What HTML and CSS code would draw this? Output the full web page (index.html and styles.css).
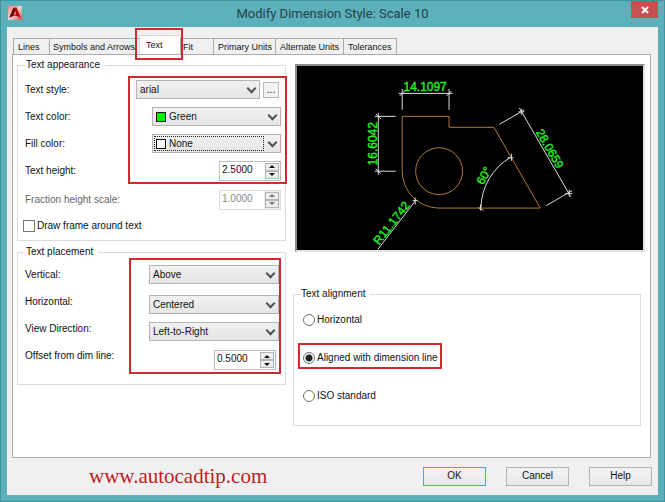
FILE: index.html
```html
<!DOCTYPE html>
<html lang="en">
<head>
<meta charset="utf-8">
<title>Modify Dimension Style: Scale 10</title>
<link rel="stylesheet" href="styles.css">
</head>
<body>
<div class="window">
  <header class="titlebar">
    <svg class="app-icon" viewBox="0 0 14 14" aria-hidden="true">
      <defs><linearGradient id="ic" x1="0" y1="0" x2="1" y2="1"><stop offset="0" stop-color="#e88a84"/><stop offset=".5" stop-color="#f6d3cf"/><stop offset="1" stop-color="#cf4a44"/></linearGradient></defs>
      <rect width="14" height="14" fill="url(#ic)"/>
      <path d="M5.5 1.5 8.6 1.5 12.8 11.8 9.4 10.2 6.6 9.6 1.4 11.8Z" fill="#a80f0f"/>
      <path d="M5.5 1.5 7 4 4.6 9.8 1.4 11.8Z" fill="#5e0808"/>
      <path d="M7 5.2 8.3 8.2 5.9 8.5Z" fill="#f3a49c"/>
    </svg>
    <h1>Modify Dimension Style: Scale 10</h1>
    <button class="close" type="button" aria-label="Close"><svg viewBox="0 0 8 8"><path d="M1 1 7 7M7 1 1 7"/></svg></button>
  </header>
  <main class="client">
    <nav class="tabs" role="tablist">
      <button type="button" role="tab" class="tab tab-lines">Lines</button>
      <button type="button" role="tab" class="tab tab-symbols">Symbols and Arrows</button>
      <div class="tab-current"><button type="button" role="tab" aria-selected="true" class="tab selected">Text</button><span class="mark"></span></div>
      <button type="button" role="tab" class="tab tab-fit">Fit</button>
      <button type="button" role="tab" class="tab tab-primary">Primary Units</button>
      <button type="button" role="tab" class="tab tab-alternate">Alternate Units</button>
      <button type="button" role="tab" class="tab tab-tolerances">Tolerances</button>
    </nav>
    <section class="panel">
      <div class="column">
        <fieldset class="group appearance">
          <legend>Text appearance</legend>
          <div class="row"><label for="style">Text style:</label>
            <div class="pair"><span class="select wide"><select id="style"><option>arial</option></select></span><button class="more" type="button">...</button></div></div>
          <div class="row"><label for="color">Text color:</label>
            <span class="select colour"><i class="swatch green"></i><select id="color"><option>Green</option></select></span></div>
          <div class="row"><label for="fill">Fill color:</label>
            <span class="select colour focused"><i class="swatch"></i><select id="fill"><option>None</option></select></span></div>
          <div class="row"><label for="height">Text height:</label>
            <span class="spin"><input id="height" type="text" value="2.5000"><span class="steps"><button type="button" aria-label="Increase"></button><button type="button" aria-label="Decrease"></button></span></span></div>
          <div class="row fraction"><label for="fraction">Fraction height scale:</label>
            <span class="spin off"><input id="fraction" type="text" value="1.0000" disabled><span class="steps"><button type="button" disabled aria-label="Increase"></button><button type="button" disabled aria-label="Decrease"></button></span></span></div>
          <label class="check"><input type="checkbox">Draw frame around text</label>
          <span class="mark"></span>
        </fieldset>
        <fieldset class="group placement">
          <legend>Text placement</legend>
          <div class="labels">
            <label for="vertical">Vertical:</label>
            <label for="horizontal">Horizontal:</label>
            <label for="direction">View Direction:</label>
            <label for="offset">Offset from dim line:</label>
          </div>
          <div class="fields">
            <span class="select"><select id="vertical"><option>Above</option></select></span>
            <span class="select"><select id="horizontal"><option>Centered</option></select></span>
            <span class="select"><select id="direction"><option>Left-to-Right</option></select></span>
            <span class="spin"><input id="offset" type="text" value="0.5000"><span class="steps"><button type="button" aria-label="Increase"></button><button type="button" aria-label="Decrease"></button></span></span>
            <span class="mark"></span>
          </div>
        </fieldset>
      </div>
      <div class="column">
        <div class="preview">
          <svg viewBox="297 66 347 185" role="img" aria-label="Dimension preview">
            <path class="part" d="M402.5 171V116.500H449.500V127.500H494.500L541 208.500H439A37 37 0 0 1 402.500 171Z"/>
            <circle class="part" cx="439.500" cy="171.500" r="23.500"/>
            <g class="dim">
              <path d="M399 93.500H453M402.500 89V110M449.500 89V110M400 96 405 91M447 96 452 91"/>
              <path d="M378.500 113V175M375 116.500H396M375 171.500H396M376 114 381 119M376 169 381 174"/>
              <path d="M415.500 201.500 378 250M413 201H418M415.500 198V205"/>
              <path d="M520 108 571.500 197M500 124.500 525 110M547 206 573 191M519 112H525M522 109V115M566 194H573M570 190V197"/>
              <path d="M481.500 208.500A59.500 59.500 0 0 1 511.500 157.500M479 208 484 211M481 205V211M508 158H514M512 154V161"/>
            </g>
            <g class="value">
              <text x="425.500" y="91">14.1097</text>
              <text transform="translate(377 144) rotate(-90)">16.6042</text>
              <text transform="translate(395 226) rotate(-52)">R11.1742</text>
              <text transform="translate(547 151) rotate(60)">28.0659</text>
              <text transform="translate(488 178) rotate(-60)">60°</text>
            </g>
          </svg>
        </div>
        <fieldset class="group alignment">
          <legend>Text alignment</legend>
          <label><input type="radio" name="align">Horizontal</label>
          <label class="chosen"><input type="radio" name="align" checked>Aligned with dimension line<span class="mark"></span></label>
          <label><input type="radio" name="align">ISO standard</label>
        </fieldset>
      </div>
    </section>
    <footer class="footer">
      <span class="site">www.autocadtip.com</span>
      <button class="action primary" type="button">OK</button>
      <button class="action" type="button">Cancel</button>
      <button class="action" type="button">Help</button>
    </footer>
  </main>
</div>
</body>
</html>
```
FILE: styles.css
```css
* { box-sizing: border-box; }
body { margin: 0; font: 10px/14px "Liberation Sans", Arial, sans-serif; color: #111; }
button, input, select { font: inherit; color: inherit; margin: 0; padding: 0; border-radius: 0; }

.window { min-height: 100vh; display: flex; flex-direction: column; background: #5bb0bc; border: 1px solid #3f929e; padding: 0 6px 6px; }
.titlebar { height: 26px; display: grid; grid-template-columns: 36px 1fr 36px; align-items: start; }
.app-icon { width: 14px; height: 14px; margin: 5px 0 0 1px; }
h1 { margin: 0; text-align: center; font: 13px/26px Roboto, sans-serif; color: #24424a; }
.close { width: 27px; height: 17px; border: 0; background: #c85050; justify-self: end; display: grid; place-items: center; }
.close svg { width: 8px; height: 8px; fill: none; stroke: #fff; stroke-width: 2; }
.client { flex: 1; display: flex; flex-direction: column; background: #f0f0f0; padding: 8px 7px 9px 5px; }

.tabs { display: flex; align-items: flex-end; height: 19px; padding-left: 1px; font-size: 9px; }
.tab { height: 16px; border: 1px solid #acacac; border-right: 0; border-bottom: 0; background: #f0f0f0; text-align: left; padding: 0 0 0 4px; white-space: nowrap; }
.tab-lines { width: 36px; }
.tab-symbols { width: 90px; padding-left: 3px; }
.tab-current { position: relative; width: 41px; height: 20px; margin-bottom: -1px; z-index: 1; }
.tab.selected { width: 100%; height: 19px; background: #fff; padding-left: 6px; border-color: #d9d9d9; }
.tab-fit { width: 33px; padding-left: 2px; }
.tab-primary { width: 62px; }
.tab-alternate { width: 68px; }
.tab-tolerances { width: 54px; border-right: 1px solid #acacac; }

.mark { position: absolute; border: 2px solid #cf2a2e; pointer-events: none; }
.tab-current .mark { inset: -7px -3px -5px -4px; }

.panel { flex: 1; background: #fff; border: 1px solid #acacac; padding: 3px 5px 4px 4px; display: grid; grid-template-columns: minmax(0, 269fr) minmax(0, 352fr); gap: 7px; align-items: start; }
.group { position: relative; margin: 0; border: 1px solid #dcdcdc; min-width: 0; padding: 0 4px 0 7px; }
legend { line-height: 14px; }
.group legend { padding: 0 5px 0 1px; }

.row { height: 27px; display: flex; align-items: center; justify-content: space-between; }
.fraction { height: 31px; color: #666; }
.appearance { padding-top: 4px; height: 183px; }
.appearance .mark { inset: 4px -2px 56px 110px; }
.pair { display: flex; align-items: center; gap: 3px; padding-right: 2px; }
.more { width: 16px; height: 16px; border: 1px solid #bbb; background: #f2f2f2; line-height: 10px; }

.select { position: relative; display: block; height: 19px; width: 130px; }
.select select { appearance: none; width: 100%; height: 100%; border: 1px solid #b4b4b4; background: linear-gradient(#f1f1f1, #e5e5e5); padding: 0 16px 0 3px; }
.select.wide { width: 124px; }
.select::after { content: ""; position: absolute; right: 5px; top: 5px; width: 5px; height: 5px; border: solid #505050; border-width: 0 2px 2px 0; transform: rotate(45deg); pointer-events: none; }
.select.colour { width: 129px; }
.select.colour select { padding-left: 16px; }
.swatch { position: absolute; left: 4px; top: 5px; width: 10px; height: 10px; border: 1px solid #111; background: #fff; pointer-events: none; }
.swatch.green { background: #00f000; }
.focused::before { content: ""; position: absolute; inset: 2px 17px 2px 2px; border: 1px dotted #222; pointer-events: none; }

.spin { display: flex; width: 62px; height: 20px; border: 1px solid #bcbcbc; background: #fff; }
.spin input { width: 44px; border: 0; background: none; padding: 0 0 2px 2px; }
.steps { display: flex; flex-direction: column; width: 16px; padding: 1px; }
.steps button { flex: 1; border: 1px solid #b4b4b4; background: #eee; display: grid; place-items: center; }
.steps button::after { content: ""; border: 3px solid transparent; border-top: 0; border-bottom: 3px solid #111; }
.steps button:last-child::after { transform: rotate(180deg); }
.spin.off { color: #888; border-color: #ddd; }
.off .steps { background: #ececec; }
.steps button:disabled::after { border-bottom-color: #777; }

.check { display: flex; align-items: center; gap: 2px; height: 22px; margin-left: -2px; }
.check input { appearance: none; width: 12px; height: 12px; border: 1px solid #777; background: #fff; }

.placement { margin-top: 4px; height: 140px; display: flex; justify-content: space-between; padding-right: 6px; }
.labels { display: flex; flex-direction: column; padding-top: 2px; }
.labels label { line-height: 27px; }
.fields { position: relative; display: grid; grid-template-rows: 30px 27px 28px 20px; align-items: start; padding-top: 6px; align-self: flex-start; }
.fields .spin { justify-self: end; margin-right: 3px; }
.fields .mark { inset: -1px -2px -4px -20px; }

.preview { margin: 6px 0 0 2px; border: 2px solid; border-color: #8c8c8c #e3e3e3 #e3e3e3 #8c8c8c; background: #000; }
.preview svg { display: block; width: 100%; height: auto; }
.part { fill: none; stroke: #b07a35; }
.dim { fill: none; stroke: #dedede; }
.value { fill: #22ee22; stroke: #22ee22; stroke-width: .4; font: 12px "Liberation Sans", Arial, sans-serif; text-anchor: middle; }

.alignment { margin: 35px 4px 0 0; height: 139px; padding: 0 0 0 9px; }
.group.alignment legend { padding: 0 5px 0 0; margin-left: -2px; }
.alignment label { position: relative; display: flex; width: max-content; align-items: center; gap: 2px; height: 38px; }
.alignment input { appearance: none; width: 12px; height: 12px; border: 1px solid #707070; border-radius: 50%; background: #fff; }
.alignment input:checked { background: radial-gradient(circle, #222 0 3px, #fff 4px); }
.chosen .mark { inset: 4px -4px 8px -5px; }

.footer { display: flex; align-items: center; justify-content: flex-end; gap: 20px; padding-top: 8px; margin-right: -1px; }
.site { margin: 0 auto 0 77px; font: 21px/20px "Liberation Serif", serif; color: #bd1e25; }
.action { width: 63px; height: 19px; border: 1px solid #b4b4b4; background: linear-gradient(#f2f2f2, #e8e8e8); }
.action.primary { border: 1px solid #569de5; }
```
